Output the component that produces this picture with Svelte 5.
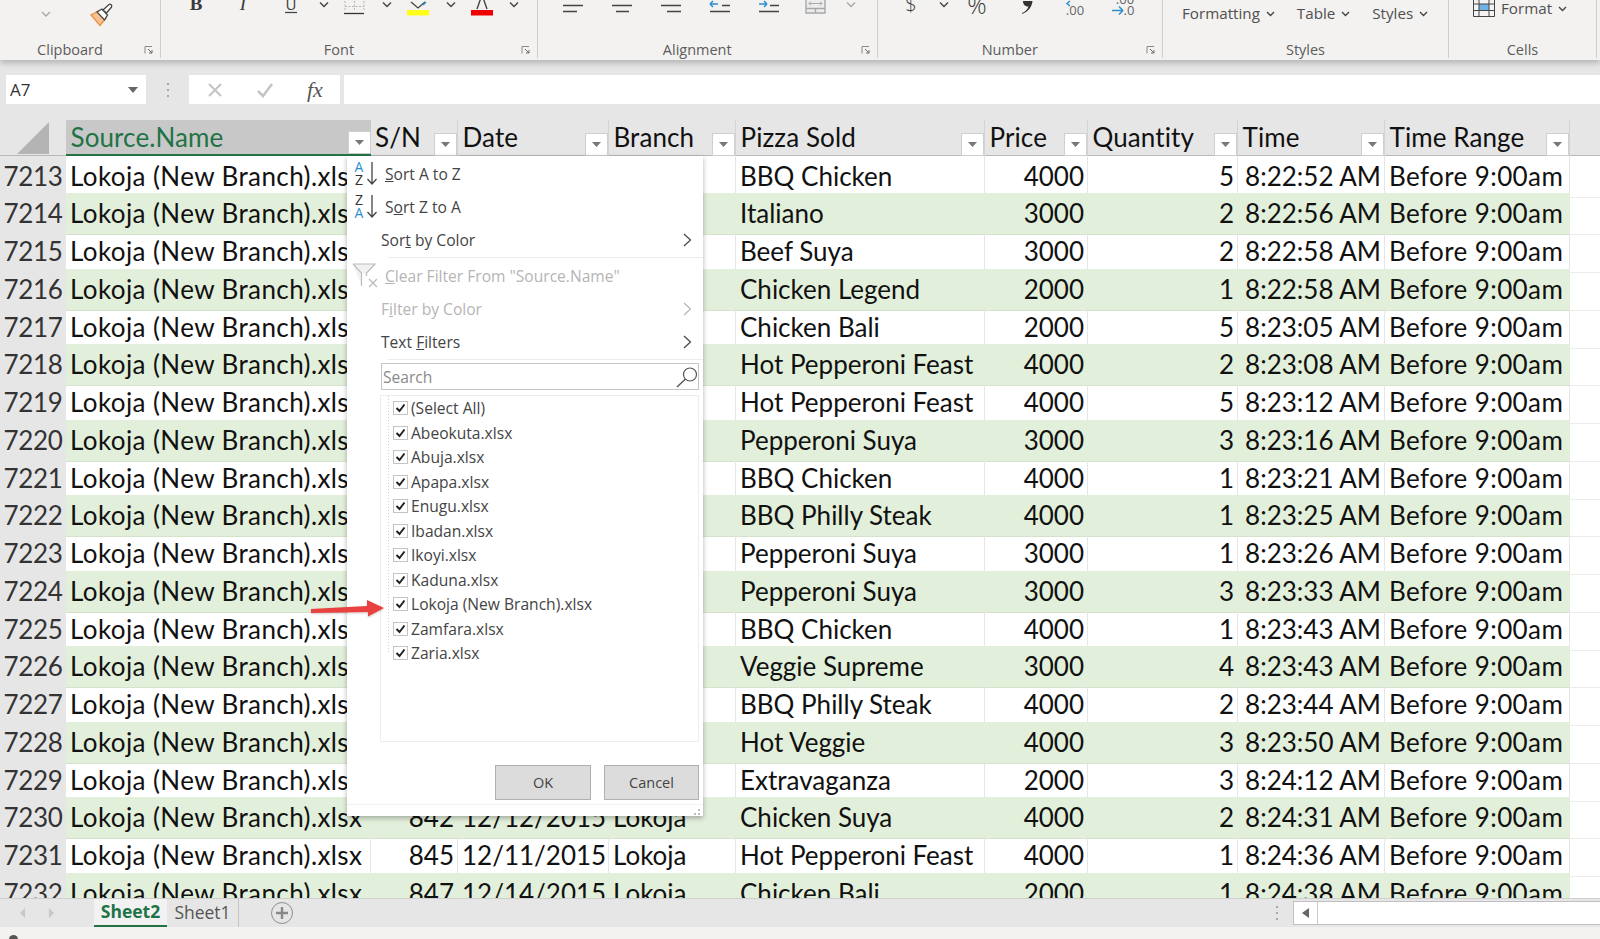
<script>
  const columns = ['Source.Name', 'S/N', 'Date', 'Branch', 'Pizza Sold', 'Price', 'Quantity', 'Time', 'Time Range'];

  // rows behind the open filter menu keep S/N, Date and Branch empty
  const rows = [
    [7213, '', '', '', 'BBQ Chicken', 4000, 5, '8:22:52 AM'],
    [7214, '', '', '', 'Italiano', 3000, 2, '8:22:56 AM'],
    [7215, '', '', '', 'Beef Suya', 3000, 2, '8:22:58 AM'],
    [7216, '', '', '', 'Chicken Legend', 2000, 1, '8:22:58 AM'],
    [7217, '', '', '', 'Chicken Bali', 2000, 5, '8:23:05 AM'],
    [7218, '', '', '', 'Hot Pepperoni Feast', 4000, 2, '8:23:08 AM'],
    [7219, '', '', '', 'Hot Pepperoni Feast', 4000, 5, '8:23:12 AM'],
    [7220, '', '', '', 'Pepperoni Suya', 3000, 3, '8:23:16 AM'],
    [7221, '', '', '', 'BBQ Chicken', 4000, 1, '8:23:21 AM'],
    [7222, '', '', '', 'BBQ Philly Steak', 4000, 1, '8:23:25 AM'],
    [7223, '', '', '', 'Pepperoni Suya', 3000, 1, '8:23:26 AM'],
    [7224, '', '', '', 'Pepperoni Suya', 3000, 3, '8:23:33 AM'],
    [7225, '', '', '', 'BBQ Chicken', 4000, 1, '8:23:43 AM'],
    [7226, '', '', '', 'Veggie Supreme', 3000, 4, '8:23:43 AM'],
    [7227, '', '', '', 'BBQ Philly Steak', 4000, 2, '8:23:44 AM'],
    [7228, '', '', '', 'Hot Veggie', 4000, 3, '8:23:50 AM'],
    [7229, '', '', '', 'Extravaganza', 2000, 3, '8:24:12 AM'],
    [7230, 842, '12/12/2015', 'Lokoja', 'Chicken Suya', 4000, 2, '8:24:31 AM'],
    [7231, 845, '12/11/2015', 'Lokoja', 'Hot Pepperoni Feast', 4000, 1, '8:24:36 AM'],
    [7232, 847, '12/14/2015', 'Lokoja', 'Chicken Bali', 2000, 1, '8:24:38 AM']
  ];

  const files = ['(Select All)', 'Abeokuta.xlsx', 'Abuja.xlsx', 'Apapa.xlsx', 'Enugu.xlsx', 'Ibadan.xlsx',
    'Ikoyi.xlsx', 'Kaduna.xlsx', 'Lokoja (New Branch).xlsx', 'Zamfara.xlsx', 'Zaria.xlsx'];

  const fontChevrons = [324, 387, 451, 514];
</script>

{#snippet launcher()}
  <svg class="launcher" width="20" height="12" viewBox="0 0 20 12">
    <path d="M5 2.500h7M5 2.500v7" stroke="#8a8a8a" fill="none" />
    <path d="M8 5l4 4M12 6v3H9" stroke="#6a6a6a" fill="none" />
  </svg>
{/snippet}

{#snippet caret()}
  <svg class="caret" width="9" height="6" viewBox="0 0 9 6"><path d="M1 1l3.500 3.500L8 1" fill="none" stroke="#444" stroke-width="1.400" /></svg>
{/snippet}

{#snippet chevron(x, y, color = '#444')}
  <path d="M{x - 4} {y - 2}l4 4 4-4" fill="none" stroke={color} stroke-width="1.400" />
{/snippet}

<div class="window">
  <div class="ribbon">
    <section class="group clipboard">
      <svg class="tools" width="160" height="38" viewBox="0 0 160 38">
        {@render chevron(46, 13, '#a9a9a9')}
        <path d="M91 14l8.500-4.500L106 17l-6 7.500z" fill="#f7c193" stroke="#e8933f" stroke-width="1.400" />
        <path d="M97 11l5-3 5.500 6-3 5z" fill="#fff" stroke="#444" stroke-width="1.300" />
        <path d="M103 9l6-5.500c1.500-1 3.500 1 2.500 2.500l-5 6z" fill="#fff" stroke="#444" stroke-width="1.300" />
      </svg>
      <div class="foot"><span>Clipboard</span>{@render launcher()}</div>
    </section>

    <section class="group font">
      <svg class="tools" width="377" height="38" viewBox="161 0 377 38">
        <text x="196" y="8.500" class="glyph bold" text-anchor="middle">B</text>
        <text x="243" y="8.500" class="glyph italic" text-anchor="middle">I</text>
        <text x="291" y="8.500" class="glyph under" text-anchor="middle">U</text>
        <path d="M285 11.500h12" stroke="#444" stroke-width="1.300" />
        {#each fontChevrons as x}
          {@render chevron(x, 3.500)}
        {/each}
        <path d="M345 0v10M354.500 0v10M364 0v10M345 5.500h19" stroke="#b5b5b5" stroke-dasharray="2 1.500" fill="none" />
        <path d="M344 12.500h20" stroke="#333" stroke-width="1.300" />
        <path d="M411 1l7 6 7-6" fill="none" stroke="#444" stroke-width="1.300" />
        <path d="M423 4l3-3" stroke="#2b8fd0" stroke-width="1.600" />
        <rect x="407" y="9" width="22" height="5.500" fill="#ffff1a" />
        <path d="M477 8l3.500-10M487 8l-3.500-10" stroke="#444" stroke-width="1.400" />
        <rect x="471" y="9" width="22" height="5.500" fill="#ee0000" />
      </svg>
      <div class="foot"><span>Font</span>{@render launcher()}</div>
    </section>

    <section class="group alignment">
      <svg class="tools" width="339" height="38" viewBox="538 0 339 38">
        <path d="M563 4.500h20M563 10.500h14" stroke="#444" stroke-width="1.300" />
        <path d="M612 4.500h20M616 10.500h13" stroke="#444" stroke-width="1.300" />
        <path d="M661 4.500h20M667 10.500h14" stroke="#444" stroke-width="1.300" />
        <path d="M710 10.500h20M722 4.500h8" stroke="#444" stroke-width="1.300" />
        <path d="M710 3h8M710 3l3-3M710 3l3 3" stroke="#2b8fd0" stroke-width="1.500" fill="none" />
        <path d="M759 10.500h20M770 4.500h9" stroke="#444" stroke-width="1.300" />
        <path d="M759 3h8M767 3l-3-3M767 3l-3 3" stroke="#2b8fd0" stroke-width="1.500" fill="none" />
        <path d="M806 -2h19v14h-19zM806 7.500h19M815.500 7.500v4.500" stroke="#a8a8a8" stroke-width="1.400" fill="#ededed" />
        <path d="M809 2.500h13M809 2.500l2-2M809 2.500l2 2M822 2.500l-2-2M822 2.500l-2 2" stroke="#a8a8a8" fill="none" />
        {@render chevron(851, 3.500, '#a9a9a9')}
      </svg>
      <div class="foot"><span>Alignment</span>{@render launcher()}</div>
    </section>

    <section class="group number">
      <svg class="tools" width="285" height="38" viewBox="877 0 285 38">
        <text x="910" y="11" class="glyph money" text-anchor="middle">$</text>
        {@render chevron(943, 3.500)}
        <text x="976" y="13" class="glyph percent" text-anchor="middle">%</text>
        <path d="M1021 13c6-2 10-7 10.500-13h-9.500c0 3.500 2 5.500 5.500 5.500-1 3-3.500 5.500-6.500 6.500z" fill="#333" />
        <path d="M1069 0l-3 2.500 3 2.500" stroke="#2b8fd0" stroke-width="1.500" fill="none" />
        <text x="1074" y="13.500" class="glyph small" text-anchor="middle">.00</text>
        <path d="M1111 9.500h11M1122 9.500l-4-4M1122 9.500l-4 4" stroke="#2b8fd0" stroke-width="1.500" fill="none" />
        <text x="1128" y="13.500" class="glyph small" text-anchor="middle">.0</text>
        <text x="1124" y="2.500" class="glyph small" text-anchor="middle">.00</text>
      </svg>
      <div class="foot"><span>Number</span>{@render launcher()}</div>
    </section>

    <section class="group styles">
      <div class="tools labels">
        <span>Formatting {@render caret()}</span>
        <span>Table {@render caret()}</span>
        <span>Styles {@render caret()}</span>
      </div>
      <div class="foot"><span>Styles</span></div>
    </section>

    <section class="group cells">
      <div class="tools labels format">
        <svg width="22" height="18" viewBox="0 0 22 18">
          <rect x="6" y="5" width="10" height="6.500" fill="#6db3e8" />
          <path d="M0.500 -3v20.500h21V-3M0 5h22M0 11.500h22M6 -3v20.500M16 -3v20.500" stroke="#444" fill="none" />
        </svg>
        <span>Format {@render caret()}</span>
      </div>
      <div class="foot"><span>Cells</span></div>
    </section>
  </div>

  <div class="formula">
    <div class="namebox">
      <span>A7</span>
      <svg width="10" height="6" viewBox="0 0 10 6"><path d="M0 0h10L5 6z" fill="#666" /></svg>
    </div>
    <svg class="grip" width="4" height="16" viewBox="0 0 4 16">
      <path d="M2 1v2M2 7v2M2 13v2" stroke="#a8a8a8" stroke-width="2" />
    </svg>
    <div class="fxbox">
      <svg width="16" height="16" viewBox="0 0 16 16"><path d="M2 2l12 12M14 2L2 14" stroke="#c4c4c4" stroke-width="2" /></svg>
      <svg width="18" height="16" viewBox="0 0 18 16"><path d="M2 9l5 5 9-12" fill="none" stroke="#c4c4c4" stroke-width="2.500" /></svg>
      <i>fx</i>
    </div>
    <div class="input"></div>
  </div>

  <div class="sheet">
    <div class="grid head">
      <div class="corner">
        <svg width="32" height="32" viewBox="0 0 32 32"><path d="M32 0v32H0z" fill="#b4b4b4" /></svg>
      </div>
      {#each columns as name, i}
        <div class="th" class:selected={i === 0}>
          <span>{name}</span>
          <button class="filter" aria-label="Filter {name}">
            <svg width="9" height="5" viewBox="0 0 9 5"><path d="M0 0h9L4.500 5z" fill="#777" /></svg>
          </button>
        </div>
      {/each}
      <div class="rest"></div>
    </div>

    <div class="body">
      {#each rows as row, r}
        <div class="grid row" class:band={r % 2 === 1}>
          <div class="rownum">{row[0]}</div>
          <div class="td wide">Lokoja (New Branch).xlsx</div>
          <div class="td num">{row[1]}</div>
          <div class="td num">{row[2]}</div>
          <div class="td">{row[3]}</div>
          <div class="td">{row[4]}</div>
          <div class="td num">{row[5]}</div>
          <div class="td num">{row[6]}</div>
          <div class="td num">{row[7]}</div>
          <div class="td wide">Before 9:00am</div>
          <div class="blank"></div>
        </div>
      {/each}
    </div>

    <div class="menu">
      <div class="item icon">
        <svg width="30" height="30" viewBox="0 0 30 30">
          <text x="7" y="13" class="az blue" text-anchor="middle">A</text>
          <text x="7" y="26" class="az" text-anchor="middle">Z</text>
          <path d="M20 3v22M15.500 20l4.500 5 4.500-5" fill="none" stroke="#444" stroke-width="1.300" />
        </svg>
        <span><u>S</u>ort A to Z</span>
      </div>
      <div class="item icon">
        <svg width="30" height="30" viewBox="0 0 30 30">
          <text x="7" y="13" class="az" text-anchor="middle">Z</text>
          <text x="7" y="26" class="az blue" text-anchor="middle">A</text>
          <path d="M20 3v22M15.500 20l4.500 5 4.500-5" fill="none" stroke="#444" stroke-width="1.300" />
        </svg>
        <span>S<u>o</u>rt Z to A</span>
      </div>
      <div class="item plain">
        <span>Sor<u>t</u> by Color</span>
        <svg class="more" width="9" height="14" viewBox="0 0 9 14"><path d="M1 1l6.500 6L1 13" fill="none" stroke="#444" stroke-width="1.200" /></svg>
      </div>
      <hr />
      <div class="item icon off">
        <svg width="30" height="30" viewBox="0 0 30 30">
          <path d="M1 3h22l-8.500 9v3M1 3l8.500 9v13" fill="#f1f1f1" stroke="#bdbdbd" stroke-width="1.200" />
          <path d="M17 18l8 8M25 18l-8 8" stroke="#bdbdbd" stroke-width="1.300" />
        </svg>
        <span><u>C</u>lear Filter From "Source.Name"</span>
      </div>
      <div class="item plain off">
        <span>F<u>i</u>lter by Color</span>
        <svg class="more" width="9" height="14" viewBox="0 0 9 14"><path d="M1 1l6.500 6L1 13" fill="none" stroke="#b5b5b5" stroke-width="1.200" /></svg>
      </div>
      <div class="item plain">
        <span>Text <u>F</u>ilters</span>
        <svg class="more" width="9" height="14" viewBox="0 0 9 14"><path d="M1 1l6.500 6L1 13" fill="none" stroke="#444" stroke-width="1.200" /></svg>
      </div>
      <hr class="last" />
      <div class="search">
        <span>Search</span>
        <svg width="22" height="22" viewBox="0 0 22 22">
          <circle cx="14" cy="8.500" r="6.500" fill="none" stroke="#555" stroke-width="1.200" />
          <path d="M9.500 13L1 21" stroke="#555" stroke-width="1.400" />
        </svg>
      </div>
      <div class="tree">
        <div class="files">
          {#each files as file}
            <label class="file">
              <span class="check">
                <svg width="11" height="10" viewBox="0 0 11 10"><path d="M1.500 5l3 3 5-6.500" fill="none" stroke="#222" stroke-width="2" /></svg>
              </span>
              {file}
            </label>
          {/each}
        </div>
      </div>
      <div class="actions">
        <button>OK</button>
        <button>Cancel</button>
      </div>
      <div class="resize">
        <svg width="10" height="10" viewBox="0 0 10 10"><path d="M7 1h2v2H7zM3 5h2v2H3zM7 5h2v2H7zM0 8h2v2H0zM3 8h2v2H3zM7 8h2v2H7z" fill="#bcbcbc" /></svg>
      </div>
    </div>

    <svg class="arrow" width="76" height="22" viewBox="0 0 76 22">
      <path d="M1 12L57 9V3l17 8-16 8.500V15L1 16z" fill="#e8413f" />
    </svg>
  </div>

  <div class="tabs">
    <svg class="nav" width="36" height="12" viewBox="0 0 36 12">
      <path d="M6 1L1 6l5 5zM30 1l5 5-5 5z" fill="#c8c8c8" />
    </svg>
    <div class="tab active">Sheet2</div>
    <div class="tab">Sheet1</div>
    <button class="add" aria-label="New sheet">
      <svg width="12" height="12" viewBox="0 0 12 12"><path d="M6 0v12M0 6h12" stroke="#888" stroke-width="2.400" /></svg>
    </button>
    <svg class="grip splitter" width="4" height="16" viewBox="0 0 4 16">
      <path d="M2 1v2M2 7v2M2 13v2" stroke="#a8a8a8" stroke-width="2" />
    </svg>
    <div class="scroll">
      <div class="scroll-left">
        <svg width="7" height="10" viewBox="0 0 7 10"><path d="M7 0L0 5l7 5z" fill="#666" /></svg>
      </div>
      <div class="scroll-track"></div>
    </div>
  </div>

  <div class="status"><span></span></div>
</div>

<style>
  :global(body) {
    margin: 0;
    background: #e6e6e6;
  }

  .window {
    display: flex;
    flex-direction: column;
    height: 939px;
    width: 1600px;
    overflow: hidden;
    font-family: "Open Sans", sans-serif;
  }

  /* ribbon */
  .ribbon {
    position: relative;
    z-index: 2;
    display: flex;
    flex: none;
    height: 60px;
    background: #f3f2f1;
    box-shadow: 0 3px 6px rgba(0, 0, 0, 0.22);
  }

  .group {
    display: flex;
    flex-direction: column;
    flex: none;
    box-sizing: border-box;
    height: 58px;
    border-right: 1px solid #d0cfcd;
  }

  .clipboard { width: 161px; }
  .font { width: 377px; }
  .alignment { width: 339.5px; }
  .number { width: 285.5px; }
  .styles { width: 286px; }
  .cells { width: 148px; }

  .tools {
    display: block;
    flex: none;
    height: 40px;
    overflow: hidden;
  }

  .glyph {
    fill: #3a3a3a;
    font-family: "Liberation Serif", serif;
    font-size: 19px;
  }

  .bold { font-weight: 700; }
  .italic { font-style: italic; }
  .under { font-family: "Open Sans", sans-serif; font-size: 15px; }
  .money { font-family: "Open Sans", sans-serif; font-size: 20px; font-weight: 300; }
  .percent { font-family: "Open Sans", sans-serif; font-size: 24px; font-weight: 300; }
  .small { font-family: "Open Sans", sans-serif; font-size: 13px; fill: #666; }

  .labels {
    display: flex;
    align-items: center;
    gap: 22px;
    box-sizing: border-box;
    padding: 0 0 15px 19px;
    color: #4f4f4f;
    font-size: 15.2px;
  }

  .format {
    gap: 6px;
    padding: 0 0 24px 24px;
  }

  .caret {
    margin-left: 2px;
    vertical-align: 2px;
  }

  .foot {
    display: flex;
    align-items: center;
    color: #5c5c5c;
    font-size: 14.5px;
    line-height: 20px;
  }

  .foot span {
    flex: 1;
    text-align: center;
  }

  .launcher {
    flex: none;
  }

  /* formula bar */
  .formula {
    display: flex;
    flex: none;
    align-items: stretch;
    height: 29px;
    margin-top: 15px;
    padding-left: 6px;
    font-size: 17px;
    color: #333;
  }

  .namebox {
    display: flex;
    align-items: center;
    justify-content: space-between;
    width: 140px;
    box-sizing: border-box;
    padding: 0 8px 0 4px;
    background: #fff;
  }

  .formula > .grip {
    align-self: center;
    margin: 0 19px 0 20px;
  }

  .fxbox {
    display: flex;
    align-items: center;
    gap: 33px;
    width: 151px;
    box-sizing: border-box;
    padding-left: 18px;
    background: #fff;
  }

  .fxbox i {
    font-family: "Liberation Serif", serif;
    font-size: 22px;
    color: #555;
  }

  .input {
    flex: 1;
    margin-left: 4px;
    background: #fff;
  }

  /* sheet */
  .sheet {
    position: relative;
    flex: 1;
    display: flex;
    flex-direction: column;
    min-height: 0;
    font-family: Lato, sans-serif;
    font-size: 26px;
    color: #111;
  }

  .grid {
    display: grid;
    grid-template-columns: 66px 304.5px 87.5px 151px 127px 249px 103px 150px 147px 185px 1fr;
  }

  .head {
    flex: none;
    box-sizing: border-box;
    height: 51.5px;
    padding-top: 15.5px;
    border-bottom: 1px solid #b9b9b9;
  }

  .corner {
    display: flex;
    align-items: flex-end;
    justify-content: flex-end;
    padding: 0 17px 2px 0;
  }

  .th {
    position: relative;
    box-sizing: border-box;
    height: 36px;
    padding-left: 4.5px;
    line-height: 34px;
    letter-spacing: 0.1px;
    white-space: nowrap;
    border-right: 1px solid #d4d4d4;
  }

  .th.selected {
    background: #c8c8c8;
    color: #217346;
    border-right: 0;
    border-bottom: 2px solid #217346;
  }

  .filter {
    position: absolute;
    right: 0;
    bottom: 0;
    display: flex;
    align-items: center;
    justify-content: center;
    width: 23px;
    height: 23px;
    padding: 0;
    background: #fff;
    border: 1px solid #cfcfcf;
  }

  .body {
    flex: 1;
    min-height: 0;
    overflow: hidden;
    background: #fff;
  }

  .row {
    height: 37.75px;
    line-height: 41px;
    white-space: nowrap;
  }

  .rownum {
    box-sizing: border-box;
    background: #e6e6e6;
    border-bottom: 1px solid #d4d4d4;
    text-align: center;
    letter-spacing: -0.3px;
    color: #333;
  }

  .td {
    box-sizing: border-box;
    padding: 0 3px 0 4px;
    overflow: hidden;
    border-right: 1px solid #e6e6e6;
    border-bottom: 1px solid #e3e3e3;
  }

  .wide {
    letter-spacing: 0.4px;
  }

  .num {
    text-align: right;
  }

  .blank {
    border-bottom: 1px solid #ececec;
  }

  .band .td {
    background: #e2efda;
    border-color: #e2efda;
    border-bottom-color: #d5e3cc;
  }

  /* filter menu */
  .menu {
    position: absolute;
    z-index: 3;
    top: 51.5px;
    left: 347px;
    width: 356px;
    height: 660px;
    box-sizing: border-box;
    padding-top: 2px;
    background: #fff;
    box-shadow: 0 2px 5px rgba(0, 0, 0, 0.3);
    font-family: "Open Sans", sans-serif;
    font-size: 15.6px;
    color: #444;
  }

  .item {
    display: flex;
    align-items: center;
    height: 33.2px;
  }

  .item.icon {
    padding-left: 5px;
    gap: 3px;
  }

  .item.plain {
    justify-content: space-between;
    padding: 0 11px 0 34px;
  }

  .off {
    color: #b5b5b5;
  }

  .az {
    font-family: "Open Sans", sans-serif;
    font-size: 14px;
    fill: #333;
  }

  .blue {
    fill: #2b8fd0;
  }

  hr {
    height: 1px;
    margin: 0 0 1px 41px;
    border: 0;
    background: #ececec;
  }

  hr.last {
    margin-bottom: 0;
  }

  .search {
    display: flex;
    align-items: center;
    justify-content: space-between;
    box-sizing: border-box;
    height: 27px;
    margin: 3.5px 4px 0 34px;
    padding: 0 0 0 1px;
    border: 1px solid #c6c6c6;
    color: #8a8a8a;
  }

  .tree {
    box-sizing: border-box;
    height: 347px;
    margin: 5px 4px 0 33px;
    border: 1px solid #ededed;
  }

  /* shorter than its rows so the dotted line stops at the last item */
  .files {
    height: 257px;
    background-image: linear-gradient(#cfcfcf 50%, transparent 50%);
    background-size: 1px 3px;
    background-position: 7px 0;
    background-repeat: repeat-y;
  }

  .file {
    display: flex;
    align-items: center;
    height: 24.5px;
    gap: 3px;
    padding-left: 12px;
  }

  .check {
    display: flex;
    align-items: center;
    justify-content: center;
    flex: none;
    box-sizing: border-box;
    width: 15px;
    height: 14px;
    border: 1px solid #c4c4c4;
    background: #fff;
  }

  .actions {
    display: flex;
    justify-content: flex-end;
    gap: 13px;
    margin: 23px 4px 0 0;
  }

  .actions button {
    box-sizing: border-box;
    height: 35px;
    background: #dcdcdc;
    border: 1px solid #b0b0b0;
    font: inherit;
    font-size: 14.5px;
    color: #444;
  }

  .actions button:first-child { width: 96px; }
  .actions button:last-child { width: 95px; }

  .resize {
    display: flex;
    justify-content: flex-end;
    margin-top: 4px;
    padding: 3px 2px 0 0;
    border-top: 1px solid #f0f0f0;
  }

  .arrow {
    position: absolute;
    z-index: 4;
    top: 493px;
    left: 310px;
    filter: drop-shadow(0 1px 1px rgba(120, 60, 60, 0.3));
  }

  /* sheet tabs */
  .tabs {
    display: flex;
    flex: none;
    align-items: center;
    height: 28px;
    background: #e6e6e6;
    border-top: 1px solid #cfcfcf;
    font-size: 17.5px;
    color: #555;
  }

  .nav {
    margin: 0 39px 0 19px;
    flex: none;
  }

  .tab {
    box-sizing: border-box;
    display: flex;
    align-items: center;
    justify-content: center;
    height: 28px;
    padding-bottom: 2px;
  }

  .tab.active {
    width: 73px;
    background: #f2f2f2;
    color: #217346;
    font-weight: 700;
    border-bottom: 2px solid #217346;
  }

  .tab:not(.active) {
    width: 72px;
    border-right: 1px solid #c4c4c4;
  }

  .add {
    display: flex;
    align-items: center;
    justify-content: center;
    box-sizing: border-box;
    width: 22px;
    height: 22px;
    margin-left: 32px;
    padding: 0;
    background: transparent;
    border: 1.5px solid #8f8f8f;
    border-radius: 50%;
  }

  .splitter {
    margin-left: auto;
    flex: none;
  }

  .scroll {
    display: flex;
    width: 307px;
    height: 24px;
    margin-left: 14px;
    box-sizing: border-box;
    border: 1px solid #c0c0c0;
    border-right: 0;
    background: #fff;
  }

  .scroll-left {
    display: flex;
    align-items: center;
    justify-content: center;
    width: 23px;
    border-right: 1px solid #c8c8c8;
  }

  .scroll-track {
    flex: 1;
  }

  .status {
    flex: none;
    height: 12px;
    background: #f3f2f1;
  }

  .status span {
    display: block;
    width: 9px;
    height: 9px;
    margin: 8px 0 0 9px;
    border-radius: 50%;
    background: #555;
  }
</style>
